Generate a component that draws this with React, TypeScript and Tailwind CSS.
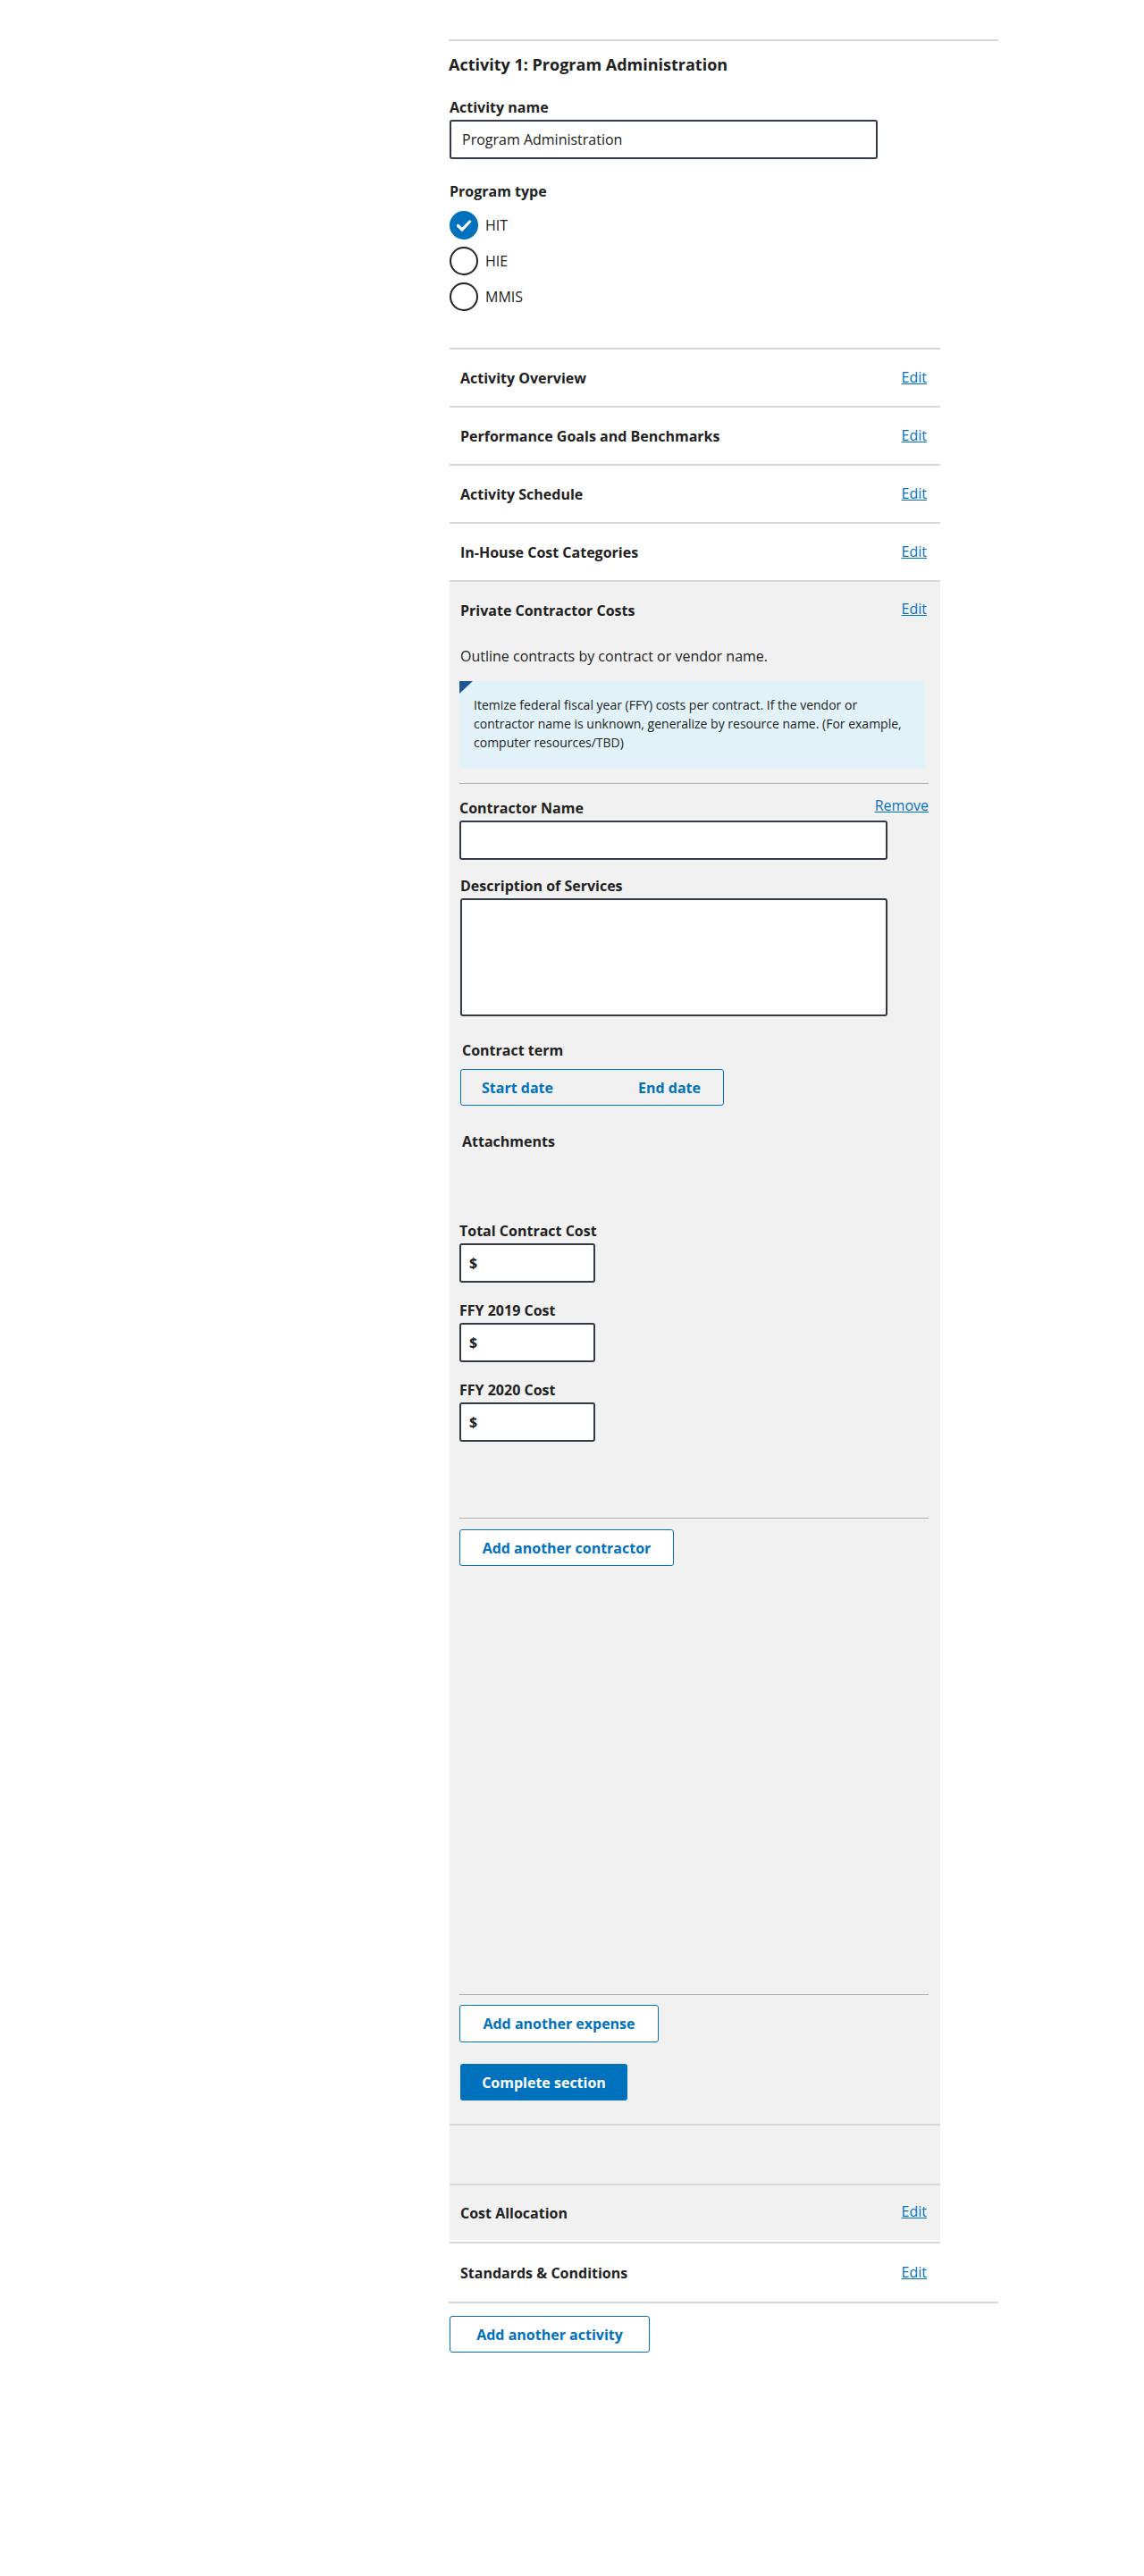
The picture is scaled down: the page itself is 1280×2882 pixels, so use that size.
import React from "react";

const BLUE = "text-[#0071bc]";

function SectionRow({ title, gray = false, className = "" }: { title: string; gray?: boolean; className?: string }) {
  return (
    <div className={`flex h-[65px] items-center justify-between border-t-2 border-[#d6d7d9] pl-[12px] pr-[15px] ${gray ? "bg-[#f1f1f1]" : ""} ${className}`}>
      <span className="text-[16px] font-bold leading-[20px]">{title}</span>
      <a href="#" className={`text-[16px] leading-[20px] underline ${BLUE} -mt-[2px]`}>
        Edit
      </a>
    </div>
  );
}

function Radio({ label, checked = false }: { label: string; checked?: boolean }) {
  return (
    <label className="flex h-[32px] items-center gap-[8px]">
      {checked ? (
        <svg width="32" height="32" viewBox="0 0 32 32" className="shrink-0">
          <circle cx="16" cy="16" r="16" fill="#0071bc" />
          <path d="M9.5 16.5l4.5 4.5 8.5-9" fill="none" stroke="#fff" strokeWidth="3.2" strokeLinecap="round" strokeLinejoin="round" />
        </svg>
      ) : (
        <span className="box-border block h-[32px] w-[32px] shrink-0 rounded-full border-2 border-[#212121] bg-white" />
      )}
      <span className="text-[16px] leading-[20px]">{label}</span>
    </label>
  );
}

function MoneyField({ label, first = false }: { label: string; first?: boolean }) {
  return (
    <div className={first ? "mt-[80px]" : "mt-[21px]"}>
      <div className="text-[16px] font-bold leading-[20px]">{label}</div>
      <div className="mt-[4px] flex h-[44px] w-[152px] items-center rounded-[3px] border-2 border-[#323a45] bg-white pl-[9px] text-[16px] font-bold">
        $
      </div>
    </div>
  );
}

function OutlineButton({ children, className = "" }: { children: React.ReactNode; className?: string }) {
  return (
    <button type="button" className={`flex h-[41px] items-center justify-center rounded-[3px] border border-[#0071bc] bg-white text-[16px] font-bold ${BLUE} ${className}`}>
      {children}
    </button>
  );
}

export default function App() {
  return (
    <div className="min-h-[2882px] bg-white text-[#212121]" style={{ fontFamily: '"Open Sans", "Noto Sans", sans-serif' }}>
      <div className="ml-[502px] w-[615px] pt-[44px]">
        <div className="border-t-2 border-[#d6d7d9]" />
        <h2 className="mt-[14px] text-[18px] font-bold leading-[24px]">Activity 1: Program Administration</h2>

        <div className="mt-[26px] pl-px">
          <div className="text-[16px] font-bold leading-[20px]">Activity name</div>
          <div className="mt-[4px] flex h-[44px] w-[479px] items-center rounded-[3px] border-2 border-[#323a45] bg-white pl-[12px] text-[16px]">
            Program Administration
          </div>
        </div>

        <div className="mt-[26px] pl-px">
          <div className="text-[16px] font-bold leading-[20px]">Program type</div>
          <div className="mt-[12px] flex flex-col gap-[8px]">
            <Radio label="HIT" checked />
            <Radio label="HIE" />
            <Radio label="MMIS" />
          </div>
        </div>

        <div className="mt-[41px] ml-px w-[549px]">
          <SectionRow title="Activity Overview" />
          <SectionRow title="Performance Goals and Benchmarks" />
          <SectionRow title="Activity Schedule" />
          <SectionRow title="In-House Cost Categories" className="h-[63px]" />

          <div className="border-t-2 border-[#d6d7d9] bg-[#f1f1f1]">
            <div className="flex h-[63px] items-center justify-between pl-[12px] pr-[15px]">
              <span className="text-[16px] font-bold leading-[20px]">Private Contractor Costs</span>
              <a href="#" className={`-mt-[4px] text-[16px] leading-[20px] underline ${BLUE}`}>
                Edit
              </a>
            </div>

            <div className="pl-[11px] pr-[13px]">
              <p className="mt-[8px] pl-px text-[16px] leading-[24px]">Outline contracts by contract or vendor name.</p>

              <div className="relative mr-[4px] mt-[16px] bg-[#e1f3f8] pb-[19px] pl-[16px] pr-[12px] pt-[16px] text-[14px] leading-[21px]">
                <span className="absolute left-0 top-0 h-0 w-0 border-r-[15px] border-t-[14px] border-r-transparent border-t-[#205493]" />
                Itemize federal fiscal year (FFY) costs per contract. If the vendor or
                <br />
                contractor name is unknown, generalize by resource name. (For example,
                <br />
                computer resources/TBD)
              </div>

              <div className="mt-[16px] border-t border-[#aeb0b5]" />

              <div className="flex items-start justify-between">
                <div className="mt-[17px] text-[16px] font-bold leading-[20px]">Contractor Name</div>
                <a href="#" className={`mt-[12px] text-[16px] leading-[24px] underline ${BLUE}`}>
                  Remove
                </a>
              </div>
              <div className="mt-[4px] h-[44px] w-[479px] rounded-[3px] border-2 border-[#323a45] bg-white" />

              <div className="mt-[19px] pl-px text-[16px] font-bold leading-[20px]">Description of Services</div>
              <div className="ml-px mt-[4px] h-[132px] w-[478px] rounded-[3px] border-2 border-[#323a45] bg-white" />

              <div className="mt-[28px] pl-[3px] text-[16px] font-bold leading-[20px]">Contract term</div>
              <div className={`ml-px mt-[11px] flex h-[41px] w-[295px] items-center rounded-[3px] border border-[#0071bc] text-[16px] font-bold ${BLUE}`}>
                <span className="ml-[23px] w-[175px]">Start date</span>
                <span>End date</span>
              </div>

              <div className="mt-[30px] pl-[3px] text-[16px] font-bold leading-[20px]">Attachments</div>

              <MoneyField label="Total Contract Cost" first />
              <MoneyField label="FFY 2019 Cost" />
              <MoneyField label="FFY 2020 Cost" />

              <div className="mt-[85px] border-t border-[#aeb0b5]" />
              <OutlineButton className="mt-[12px] w-[240px]">Add another contractor</OutlineButton>

              <div className="mt-[479px] border-t border-[#aeb0b5]" />
              <OutlineButton className="mt-[11px] h-[42px] w-[223px]">Add another expense</OutlineButton>

              <button type="button" className="ml-px mt-[24px] flex h-[41px] w-[187px] items-center justify-center rounded-[3px] bg-[#0071bc] text-[16px] font-bold text-white">
                Complete section
              </button>
            </div>
            <div className="mt-[26px] h-[67px] border-t-2 border-[#d6d7d9]" />
            <div className="flex h-[63px] items-center justify-between border-t-2 border-[#d6d7d9] pl-[12px] pr-[15px]">
              <span className="text-[16px] font-bold leading-[20px]">Cost Allocation</span>
              <a href="#" className={`-mt-[4px] text-[16px] leading-[20px] underline ${BLUE}`}>
                Edit
              </a>
            </div>
          </div>
          <SectionRow title="Standards & Conditions" className="mt-[2px] h-[67px]" />
        </div>

        <div className="border-t-2 border-[#d6d7d9]" />
        <OutlineButton className="ml-px mt-[14px] h-[40px] w-[224px]">Add another activity</OutlineButton>
      </div>
    </div>
  );
}
